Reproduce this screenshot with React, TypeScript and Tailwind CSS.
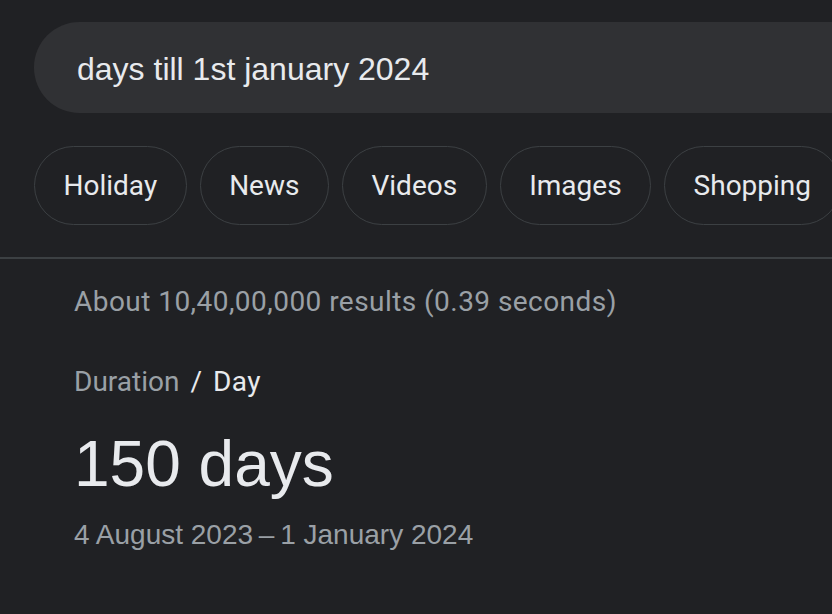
const CHIPS = ['Holiday', 'News', 'Videos', 'Images', 'Shopping'];

export default function App() {
    return (
        <div className="w-[832px] h-[614px] overflow-hidden bg-[#202124]">
            {/* Search box */}
            <div className="pt-[22px] pl-[34px]">
                <div className="w-[900px] h-[91px] rounded-full bg-[#303134] flex items-center pl-[43px] pt-[3px]">
                    <span className="text-[32px] text-[#e8eaed] font-['Liberation_Sans',Arial,sans-serif]">
                        days till 1st january 2024
                    </span>
                </div>
            </div>

            {/* Chips */}
            <div className="flex gap-[13px] pl-[34px] mt-[33px] w-[1000px]">
                {CHIPS.map((chip) => (
                    <div
                        key={chip}
                        className="h-[79px] px-[28.5px] rounded-full border-[1.5px] border-[#3c4043] flex items-center shrink-0"
                    >
                        <span className="text-[28px] text-[#e8eaed] font-['Roboto',sans-serif]">{chip}</span>
                    </div>
                ))}
            </div>

            {/* Divider */}
            <div className="mt-[32px] h-[2px] bg-[#3c4043]" />

            {/* Results */}
            <div className="pl-[74px]">
                <p className="mt-[26px] text-[28px] leading-[34px] tracking-[0.45px] text-[#9aa0a6] font-['Roboto',sans-serif]">
                    About 10,40,00,000 results (0.39 seconds)
                </p>
                <div className="mt-[46px] flex items-center text-[28px] leading-[34px] font-['Roboto',sans-serif]">
                    <span className="text-[#9aa0a6]">Duration</span>
                    <span className="text-[#e8eaed] mx-[11px]">/</span>
                    <span className="text-[#e8eaed] tracking-[0.5px]">Day</span>
                </div>
                <p className="mt-[29px] text-[64px] leading-[72px] text-[#e8eaed] font-['Liberation_Sans',Arial,sans-serif]">
                    150 days
                </p>
                <p className="mt-[18px] text-[28px] leading-[34px] text-[#9aa0a6] font-['Liberation_Sans',Arial,sans-serif]">
                    4 August 2023<span className="tracking-[-2px]"> </span>–<span className="tracking-[-2px]"> </span>1 January 2024
                </p>
            </div>
        </div>
    );
}
